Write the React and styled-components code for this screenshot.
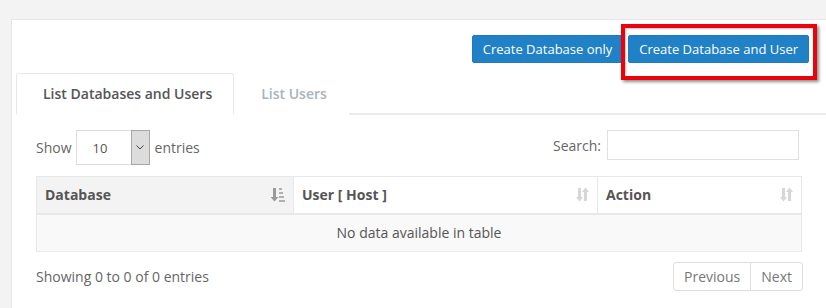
import React from 'react';
import styled, { createGlobalStyle } from 'styled-components';

const GlobalStyle = createGlobalStyle`
  html, body {
    margin: 0;
    padding: 0;
    background: #f3f3f3;
    overflow: hidden;
  }
  body {
    font-family: 'Open Sans', 'Liberation Sans', sans-serif;
    font-size: 14px;
    color: #555;
  }
`;

const Page = styled.div`
  padding: 19px 0 0 11px;
`;

const Panel = styled.section`
  width: 816px;
  box-sizing: border-box;
  background: #fff;
  border-top: 1px solid #e6e6e6;
  border-left: 1px solid #e6e6e6;
  height: 300px;
`;

const Toolbar = styled.div`
  display: flex;
  justify-content: flex-end;
  gap: 5px;
  padding: 15px 18px 0 0;
`;

const Button = styled.button`
  position: relative;
  height: 28px;
  padding: 0 10px;
  border: 1px solid #1f7bc0;
  border-radius: 2px;
  background: #2181c6;
  color: #fff;
  font-family: inherit;
  font-size: 13px;
  line-height: 26px;
  cursor: pointer;

  ${(p) =>
    p.$highlight &&
    `
    &::after {
      content: '';
      position: absolute;
      left: -8px;
      right: -9px;
      top: -12px;
      bottom: -18px;
      border: 4px solid #e8040a;
      box-shadow: 2px 2px 3px rgba(0, 0, 0, 0.45), inset 1px 1px 2px rgba(0, 0, 0, 0.25);
      pointer-events: none;
    }
  `}
`;

const TabBar = styled.div`
  display: flex;
  margin: 10px 0 0 4px;
  border-bottom: 2px solid #e9ebee;
`;

const Tab = styled.div`
  height: 42px;
  box-sizing: border-box;
  padding: 0 21px 0 26px;
  margin-bottom: -2px;
  display: flex;
  align-items: center;
  font-size: 14px;
  font-weight: 600;
  color: ${(p) => (p.$active ? '#555' : '#aab2bd')};
  background: #fff;
  border: 1px solid ${(p) => (p.$active ? '#e6e8eb' : 'transparent')};
  border-bottom: ${(p) => (p.$active ? '2px solid #fff' : '2px solid transparent')};
  border-radius: 3px 3px 0 0;
`;

const Content = styled.div`
  padding: 15px 24px 0 24px;
`;

const Controls = styled.div`
  display: flex;
  justify-content: space-between;
  align-items: flex-start;
  margin-bottom: 11px;
`;

const Label = styled.label`
  display: flex;
  align-items: center;
  gap: 4px;
  color: #666;
  font-size: 14px;
  height: 35px;
`;

const SearchLabel = styled(Label)`
  height: 30px;
  gap: 6px;
  margin-right: 4px;
`;

const Select = styled.div`
  width: 74px;
  height: 35px;
  box-sizing: border-box;
  border: 1px solid #dcdcdc;
  display: flex;
  align-items: stretch;
  margin: 0 1px 0 0;
`;

const SelectValue = styled.span`
  flex: 1;
  display: flex;
  align-items: center;
  padding-left: 16px;
  font-size: 13px;
  color: #555;
`;

const SelectArrow = styled.span`
  width: 17px;
  background: #dcdcdc;
  border: 1px solid #a8a8a8;
  margin: -1px -1px -1px 0;
  display: flex;
  align-items: center;
  justify-content: center;
`;

const SearchInput = styled.input`
  width: 192px;
  height: 30px;
  box-sizing: border-box;
  border: 1px solid #e0e0e0;
  outline: none;
`;

const Table = styled.table`
  width: 766px;
  table-layout: fixed;
  border-collapse: collapse;
  border: 1px solid #e8e8e8;
`;

const Th = styled.th`
  height: 37px;
  box-sizing: border-box;
  padding: 0 8px;
  text-align: left;
  font-size: 14px;
  font-weight: 700;
  color: #555;
  background: ${(p) => (p.$sorted ? '#f3f3f3' : '#fff')};
  border: 1px solid #e8e8e8;
  border-bottom: 2px solid #e8e8e8;
  width: ${(p) => p.$width || 'auto'};
`;

const HeadInner = styled.div`
  display: flex;
  align-items: center;
  justify-content: space-between;
`;

const EmptyCell = styled.td`
  height: 38px;
  box-sizing: border-box;
  padding: 0;
  text-align: center;
  background: #f9f9f9;
  color: #555;
  font-size: 14px;
  border: 1px solid #e8e8e8;
`;

const Footer = styled.div`
  display: flex;
  justify-content: space-between;
  align-items: center;
  margin-top: 10px;
`;

const Info = styled.div`
  color: #666;
  font-size: 14px;
`;

const Pager = styled.div`
  display: flex;
  height: 29px;
  box-sizing: border-box;
  border: 1px solid #ddd;
  border-radius: 3px;
`;

const PageButton = styled.span`
  display: flex;
  align-items: center;
  padding: 0 10px;
  color: #777;
  font-size: 14px;
  & + & {
    border-left: 1px solid #ddd;
  }
`;

const SortAsc = () => (
  <svg width="15" height="15" viewBox="0 0 15 15">
    <path d="M3 1h3v9h2.5L4.5 14.5 0.5 10H3z" fill="#9a9a9a" />
    <rect x="9" y="1" width="3" height="2" fill="#b0b0b0" />
    <rect x="9" y="5" width="4" height="2" fill="#b0b0b0" />
    <rect x="9" y="9" width="5" height="2" fill="#b0b0b0" />
    <rect x="9" y="13" width="6" height="2" fill="#b0b0b0" />
  </svg>
);

const SortBoth = () => (
  <svg width="13" height="15" viewBox="0 0 13 15">
    <path d="M2 1h3v9h2L3.5 14.5 0 10h2z" fill="#d6d6d6" />
    <path d="M8 14h3V5h2L9.5 0.5 6 5h2z" fill="#d6d6d6" />
  </svg>
);

const Chevron = () => (
  <svg width="8" height="5" viewBox="0 0 8 5">
    <path d="M0.5 0.5L4 4l3.5-3.5" stroke="#444" strokeWidth="1" fill="none" />
  </svg>
);

const App = () => {
  return (
    <Page>
      <GlobalStyle />
      <Panel>
        <Toolbar>
          <Button>Create Database only</Button>
          <Button $highlight>Create Database and User</Button>
        </Toolbar>
        <TabBar>
          <Tab $active>List Databases and Users</Tab>
          <Tab>List Users</Tab>
        </TabBar>
        <Content>
          <Controls>
            <Label>
              Show
              <Select>
                <SelectValue>10</SelectValue>
                <SelectArrow>
                  <Chevron />
                </SelectArrow>
              </Select>
              entries
            </Label>
            <SearchLabel>
              Search:
              <SearchInput type="text" />
            </SearchLabel>
          </Controls>
          <Table>
            <thead>
              <tr>
                <Th $sorted $width="257px">
                  <HeadInner>
                    Database
                    <SortAsc />
                  </HeadInner>
                </Th>
                <Th $width="304px">
                  <HeadInner>
                    User [ Host ]
                    <SortBoth />
                  </HeadInner>
                </Th>
                <Th>
                  <HeadInner>
                    Action
                    <SortBoth />
                  </HeadInner>
                </Th>
              </tr>
            </thead>
            <tbody>
              <tr>
                <EmptyCell colSpan={3}>No data available in table</EmptyCell>
              </tr>
            </tbody>
          </Table>
          <Footer>
            <Info>Showing 0 to 0 of 0 entries</Info>
            <Pager>
              <PageButton>Previous</PageButton>
              <PageButton>Next</PageButton>
            </Pager>
          </Footer>
        </Content>
      </Panel>
    </Page>
  );
};

export default App;
